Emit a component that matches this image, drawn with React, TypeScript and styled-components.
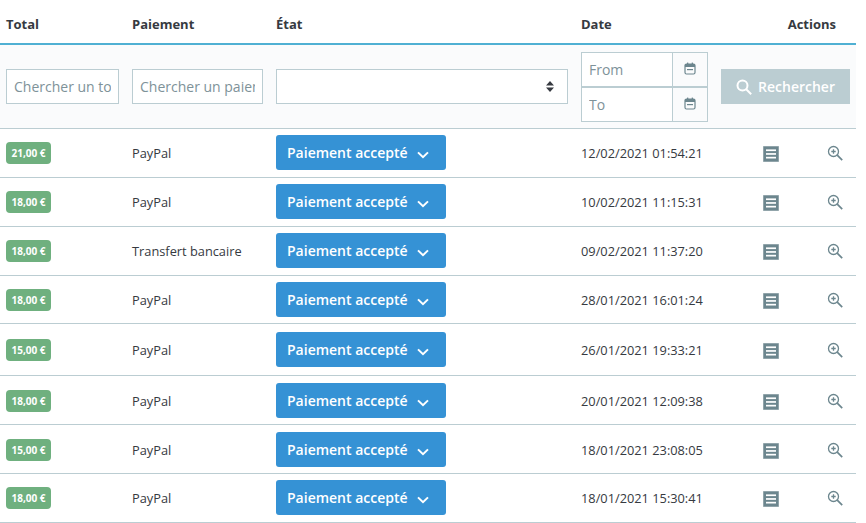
import { FC } from "react";
import styled, { createGlobalStyle } from "styled-components";

type Order = { total: string; payment: string; date: string; height: number; top: number };

const orders: Order[] = [
  { total: "21,00 €", payment: "PayPal", date: "12/02/2021 01:54:21", height: 49, top: 6 },
  { total: "18,00 €", payment: "PayPal", date: "10/02/2021 11:15:31", height: 49, top: 6 },
  { total: "18,00 €", payment: "Transfert bancaire", date: "09/02/2021 11:37:20", height: 49, top: 6 },
  { total: "18,00 €", payment: "PayPal", date: "28/01/2021 16:01:24", height: 48, top: 6 },
  { total: "15,00 €", payment: "PayPal", date: "26/01/2021 19:33:21", height: 52, top: 8 },
  { total: "18,00 €", payment: "PayPal", date: "20/01/2021 12:09:38", height: 49, top: 7 },
  { total: "15,00 €", payment: "PayPal", date: "18/01/2021 23:08:05", height: 49, top: 7 },
  { total: "18,00 €", payment: "PayPal", date: "18/01/2021 15:30:41", height: 49, top: 6 },
];

const CalendarIcon: FC = () => (
  <svg width="12" height="13" viewBox="0 0 12 13" fill="none">
    <rect x="1" y="2" width="10" height="10" rx="1.5" stroke="#6c868e" strokeWidth="1.2" />
    <rect x="1" y="2" width="10" height="3" fill="#6c868e" />
    <rect x="3" y="0.6" width="1.3" height="2.4" fill="#6c868e" />
    <rect x="7.7" y="0.6" width="1.3" height="2.4" fill="#6c868e" />
    <rect x="3" y="7" width="6" height="1.2" fill="#6c868e" />
  </svg>
);

const ChevronIcon: FC = () => (
  <svg width="12" height="8" viewBox="0 0 12 8" fill="none">
    <path d="M1 1.4 6 6.2l5-4.8" stroke="#fff" strokeWidth="2" />
  </svg>
);

const SortIcon: FC = () => (
  <svg width="8" height="11" viewBox="0 0 8 11" fill="#363a41">
    <path d="M4 0 8 4.4H0zM4 11 0 6.6h8z" />
  </svg>
);

const SearchIcon: FC = () => (
  <svg width="16" height="16" viewBox="0 0 16 16" fill="none" stroke="#fff" strokeWidth="2">
    <circle cx="6.5" cy="6.5" r="5" />
    <path d="m10.2 10.2 5 5" />
  </svg>
);

const InvoiceIcon: FC = () => (
  <svg width="16" height="16" viewBox="0 0 16 16">
    <rect x="0.5" y="0.5" width="15" height="15" fill="#6c868e" stroke="#6c868e" strokeDasharray="1 1" />
    <rect x="3" y="3.4" width="10" height="1.7" fill="#fff" />
    <rect x="3" y="7.1" width="10" height="1.7" fill="#fff" />
    <rect x="3" y="10.8" width="10" height="1.7" fill="#fff" />
  </svg>
);

const ZoomIcon: FC = () => (
  <ZoomSvg width="16" height="16" viewBox="0 0 16 16" fill="none" stroke="#6c868e" strokeWidth="1.3">
    <circle cx="6.5" cy="6.5" r="5" />
    <path d="M4.3 6.5h4.4M6.5 4.3v4.4" />
    <path d="m10.2 10.2 5 5" strokeWidth="1.7" />
  </ZoomSvg>
);

const App: FC = () => {
  return (
    <>
      <GlobalStyle />
      <Table>
        <HeadRow>
          <HeadCell>Total</HeadCell>
          <HeadCell>Paiement</HeadCell>
          <HeadCell>État</HeadCell>
          <HeadCell>Date</HeadCell>
          <ActionsHead>Actions</ActionsHead>
        </HeadRow>
        <FilterRow>
          <TotalInput placeholder="Chercher un total" />
          <PaymentInput placeholder="Chercher un paiement" />
          <StateSelect>
            <SortIcon />
          </StateSelect>
          <DateGroup>
            <DateField>
              <DateInput placeholder="From" />
              <DateAddon>
                <CalendarIcon />
              </DateAddon>
            </DateField>
            <DateField>
              <DateInput placeholder="To" />
              <DateAddon>
                <CalendarIcon />
              </DateAddon>
            </DateField>
          </DateGroup>
          <SearchButton>
            <SearchIcon />
            Rechercher
          </SearchButton>
        </FilterRow>
        {orders.map((order) => (
          <OrderRow key={order.date} $height={order.height} $top={order.top}>
            <div>
              <Badge>{order.total}</Badge>
            </div>
            <Cell>{order.payment}</Cell>
            <div>
              <StateButton>
                Paiement accepté
                <ChevronIcon />
              </StateButton>
            </div>
            <Cell>{order.date}</Cell>
            <Actions>
              <InvoiceIcon />
              <ZoomIcon />
            </Actions>
          </OrderRow>
        ))}
      </Table>
    </>
  );
};

export default App;

const GlobalStyle = createGlobalStyle`
  html, body {
    margin: 0;
    background: #fff;
  }
  body {
    font-family: "Open Sans", "Liberation Sans", sans-serif;
    color: #363a41;
  }
  * {
    box-sizing: border-box;
  }
`;

const columns = "126px 144px 305px 140px 141px";

const Table = styled.div`
  width: 856px;
`;

const HeadRow = styled.div`
  display: grid;
  grid-template-columns: ${columns};
  align-items: center;
  height: 45px;
  padding-top: 4px;
  border-bottom: 2px solid #4fb0d3;
`;

const HeadCell = styled.div`
  padding-left: 6px;
  font-size: 13px;
  font-weight: 700;
`;

const ActionsHead = styled(HeadCell)`
  padding-left: 0;
  padding-right: 20px;
  text-align: right;
`;

const FilterRow = styled.div`
  display: grid;
  grid-template-columns: ${columns};
  grid-template-rows: 70px;
  align-items: center;
  height: 84px;
  padding-top: 7px;
  background: #fafbfc;
  border-bottom: 1px solid #bbcdd2;
`;

const TextInput = styled.input`
  display: block;
  height: 35px;
  margin: 0 0 1px 6px;
  padding: 0 7px;
  border: 1px solid #bbcdd2;
  background: #fff;
  font-family: inherit;
  font-size: 14px;
  color: #6c868e;
  outline: none;

  &::placeholder {
    color: #7e9299;
    opacity: 1;
  }
`;

const TotalInput = styled(TextInput)`
  width: 113px;
`;

const PaymentInput = styled(TextInput)`
  width: 131px;
`;

const StateSelect = styled.div`
  display: flex;
  align-items: center;
  justify-content: flex-end;
  width: 292px;
  height: 35px;
  margin: 0 0 1px 6px;
  padding-right: 13px;
  border: 1px solid #bbcdd2;
  background: #fff;
`;

const DateGroup = styled.div`
  display: flex;
  flex-direction: column;
  width: 127px;
  margin-left: 6px;
`;

const DateField = styled.div`
  display: flex;
  height: 35px;
  border: 1px solid #bbcdd2;
`;

const DateInput = styled.input`
  flex: 1;
  min-width: 0;
  padding: 0 7px;
  border: 0;
  background: #fff;
  font-family: inherit;
  font-size: 14px;
  outline: none;

  &::placeholder {
    color: #7e9299;
    opacity: 1;
  }
`;

const DateAddon = styled.div`
  display: flex;
  align-items: center;
  justify-content: center;
  width: 35px;
  padding-bottom: 2px;
  border-left: 1px solid #bbcdd2;
  background: #fafbfc;
`;

const SearchButton = styled.div`
  display: flex;
  align-items: center;
  justify-content: center;
  gap: 6px;
  width: 129px;
  height: 35px;
  margin: 0 0 1px 6px;
  background: #bbcdd2;
  color: #fff;
  font-size: 14px;
  font-weight: 600;
`;

const OrderRow = styled.div<{ $height: number; $top: number }>`
  display: grid;
  grid-template-columns: ${columns};
  grid-template-rows: 35px;
  align-items: center;
  height: ${(p) => p.$height}px;
  padding-top: ${(p) => p.$top}px;
  border-bottom: 1px solid #bbcdd2;
`;

const Cell = styled.div`
  padding-left: 6px;
  font-size: 12.8px;
`;

const Badge = styled.span`
  display: flex;
  align-items: center;
  justify-content: center;
  width: 45px;
  height: 22px;
  margin: 1px 0 0 6px;
  border-radius: 4px;
  background: #6fb07f;
  color: #fff;
  font-size: 10px;
  font-weight: 700;
`;

const StateButton = styled.div`
  display: flex;
  align-items: center;
  gap: 9px;
  width: 170px;
  height: 35px;
  margin-left: 6px;
  padding-left: 11px;
  border-radius: 3px;
  background: #3592d5;
  color: #fff;
  font-size: 14px;
  font-weight: 600;

  svg {
    margin-top: 4px;
  }
`;

const Actions = styled.div`
  display: flex;
  align-items: center;
  justify-content: space-between;
  padding: 2px 13px 0 48px;
`;

const ZoomSvg = styled.svg`
  margin-bottom: 2px;
`;
